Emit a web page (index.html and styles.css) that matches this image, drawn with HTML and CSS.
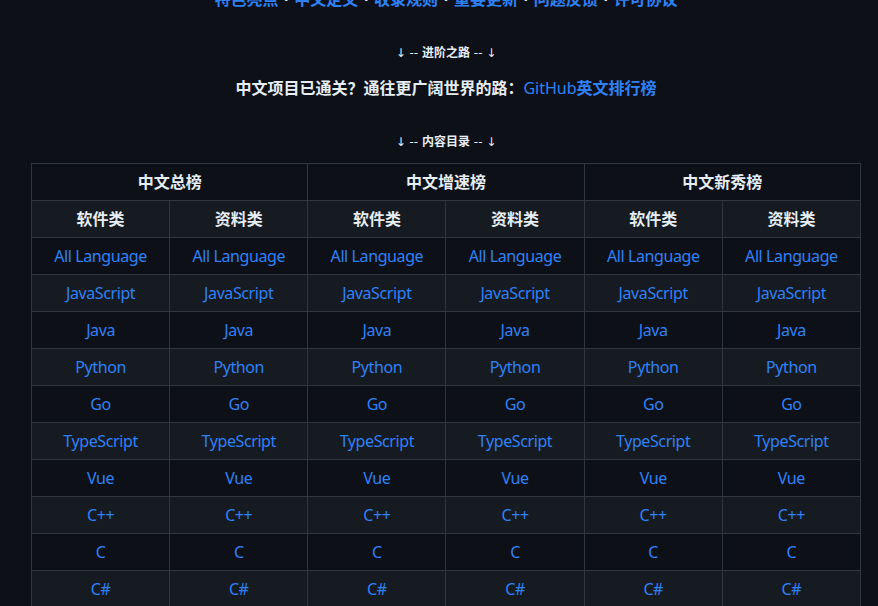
FILE: index.html
```html
<!DOCTYPE html>
<html lang="zh">
<head>
<meta charset="utf-8">
<link rel="stylesheet" href="styles.css">
</head>
<body>
<div class="page">
  <p class="nav">
    <a class="strong" href="#">特色亮点</a><span class="sep"> · </span><a class="strong" href="#">中文定义</a><span class="sep"> · </span><a class="strong" href="#">收录规则</a><span class="sep"> · </span><a class="strong" href="#">重要更新</a><span class="sep"> · </span><a class="strong" href="#">问题反馈</a><span class="sep"> · </span><a class="strong" href="#">许可协议</a>
  </p>
  <p class="sub"><span class="arrow">↓ -- </span><b>进阶之路</b><span class="arrow"> -- ↓</span></p>
  <p class="lead"><b>中文项目已通关？通往更广阔世界的路：</b><a href="#"><span class="gh">GitHub</span><b>英文排行榜</b></a></p>
  <p class="sub toc"><span class="arrow">↓ -- </span><b>内容目录</b><span class="arrow"> -- ↓</span></p>
  <table class="charts">
    <thead>
      <tr><th colspan="2">中文总榜</th><th colspan="2">中文增速榜</th><th colspan="2">中文新秀榜</th></tr>
      <tr><th>软件类</th><th>资料类</th><th>软件类</th><th>资料类</th><th>软件类</th><th>资料类</th></tr>
    </thead>
    <tbody>
      <tr><td><a href="#">All Language</a></td><td><a href="#">All Language</a></td><td><a href="#">All Language</a></td><td><a href="#">All Language</a></td><td><a href="#">All Language</a></td><td><a href="#">All Language</a></td></tr>
      <tr><td><a href="#">JavaScript</a></td><td><a href="#">JavaScript</a></td><td><a href="#">JavaScript</a></td><td><a href="#">JavaScript</a></td><td><a href="#">JavaScript</a></td><td><a href="#">JavaScript</a></td></tr>
      <tr><td><a href="#">Java</a></td><td><a href="#">Java</a></td><td><a href="#">Java</a></td><td><a href="#">Java</a></td><td><a href="#">Java</a></td><td><a href="#">Java</a></td></tr>
      <tr><td><a href="#">Python</a></td><td><a href="#">Python</a></td><td><a href="#">Python</a></td><td><a href="#">Python</a></td><td><a href="#">Python</a></td><td><a href="#">Python</a></td></tr>
      <tr><td><a href="#">Go</a></td><td><a href="#">Go</a></td><td><a href="#">Go</a></td><td><a href="#">Go</a></td><td><a href="#">Go</a></td><td><a href="#">Go</a></td></tr>
      <tr><td><a href="#">TypeScript</a></td><td><a href="#">TypeScript</a></td><td><a href="#">TypeScript</a></td><td><a href="#">TypeScript</a></td><td><a href="#">TypeScript</a></td><td><a href="#">TypeScript</a></td></tr>
      <tr><td><a href="#">Vue</a></td><td><a href="#">Vue</a></td><td><a href="#">Vue</a></td><td><a href="#">Vue</a></td><td><a href="#">Vue</a></td><td><a href="#">Vue</a></td></tr>
      <tr><td><a href="#">C++</a></td><td><a href="#">C++</a></td><td><a href="#">C++</a></td><td><a href="#">C++</a></td><td><a href="#">C++</a></td><td><a href="#">C++</a></td></tr>
      <tr><td><a href="#">C</a></td><td><a href="#">C</a></td><td><a href="#">C</a></td><td><a href="#">C</a></td><td><a href="#">C</a></td><td><a href="#">C</a></td></tr>
      <tr><td><a href="#">C#</a></td><td><a href="#">C#</a></td><td><a href="#">C#</a></td><td><a href="#">C#</a></td><td><a href="#">C#</a></td><td><a href="#">C#</a></td></tr>
      <tr><td><a href="#">PHP</a></td><td><a href="#">PHP</a></td><td><a href="#">PHP</a></td><td><a href="#">PHP</a></td><td><a href="#">PHP</a></td><td><a href="#">PHP</a></td></tr>
    </tbody>
  </table>
</div>
</body>
</html>
```
FILE: styles.css
```css
html, body {
  margin: 0;
  background: #0d1117;
}
body {
  color: #e6edf3;
  font-family: "Noto Sans", "Noto Sans CJK SC", sans-serif;
  font-size: 16px;
  line-height: 1.5;
  overflow: hidden;
}
a {
  color: #2f81f7;
  text-decoration: none;
}
b, .strong {
  font-weight: 700;
}
.page {
  width: 830px;
  margin-left: 31px;
  text-align: center;
}
.nav {
  margin: -13px 0 0;
  font-size: 16px;
}
.sep {
  color: #e6edf3;
  font-weight: 700;
  padding: 0 1.5px;
}
.sub {
  margin: 33px 0 0;
  font-size: 12px;
  line-height: 18px;
}
.sub .arrow {
  font-family: "DejaVu Sans", sans-serif;
  font-weight: 400;
  color: #e6edf3;
}
.lead {
  margin: 14px 0 0;
  font-size: 16px;
  line-height: 24px;
}
.gh {
  font-weight: 400;
}
.toc {
  margin-top: 33px;
}
.charts {
  margin-top: 12px;
  width: 830px;
  table-layout: fixed;
  border-collapse: collapse;
  border-spacing: 0;
}
.charts th,
.charts td {
  border: 1px solid #30363d;
  padding: 6px 13px;
  text-align: center;
  line-height: 24px;
}
.charts td {
  letter-spacing: -0.4px;
}
.charts th {
  font-weight: 700;
}
.charts tr {
  background: #0d1117;
}
.charts tr:nth-child(2n) {
  background: #161b22;
}
```
